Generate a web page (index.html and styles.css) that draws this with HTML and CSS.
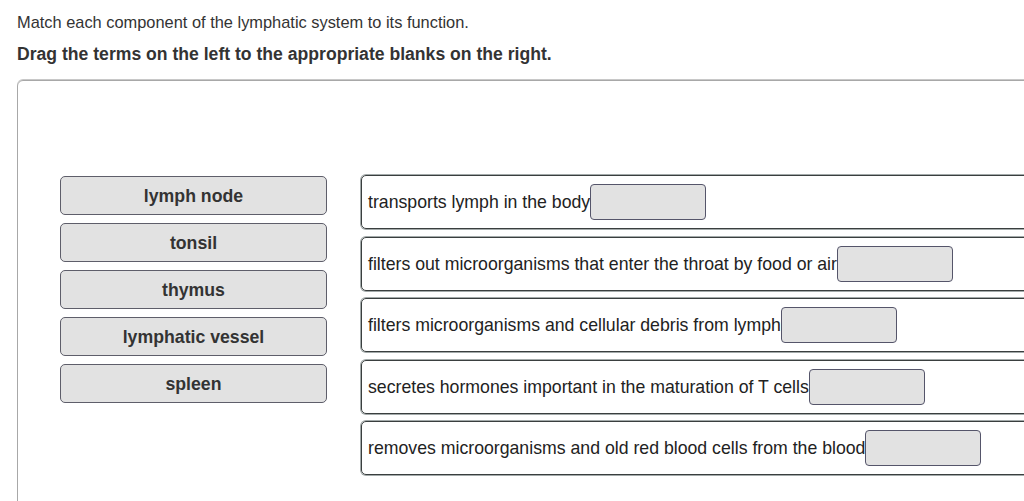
FILE: index.html
```html
<!DOCTYPE html>
<html lang="en">
<head>
  <meta charset="UTF-8">
  <title>Lymphatic System Matching</title>
  <link rel="stylesheet" href="styles.css">
</head>
<body>
  <p class="prompt">Match each component of the lymphatic system to its function.</p>
  <p class="instructions">Drag the terms on the left to the appropriate blanks on the right.</p>

  <div class="panel">
    <div class="terms">
      <div class="term">lymph node</div>
      <div class="term">tonsil</div>
      <div class="term">thymus</div>
      <div class="term">lymphatic vessel</div>
      <div class="term">spleen</div>
    </div>

    <div class="targets">
      <div class="target">transports lymph in the body<span class="blank"></span></div>
      <div class="target">filters out microorganisms that enter the throat by food or air<span class="blank"></span></div>
      <div class="target">filters microorganisms and cellular debris from lymph<span class="blank"></span></div>
      <div class="target">secretes hormones important in the maturation of T cells<span class="blank"></span></div>
      <div class="target">removes microorganisms and old red blood cells from the blood<span class="blank"></span></div>
    </div>
  </div>
</body>
</html>
```

FILE: styles.css
```css
html, body {
  overflow: hidden;
}

body {
  margin: 0;
  padding: 12px 0 0 17px;
  font-family: "Liberation Sans", Arial, sans-serif;
  font-size: 16.4px;
  line-height: 20px;
  color: #333;
  background: #fff;
}

.prompt {
  margin: 0;
}

.instructions {
  margin: 12px 0 0;
  font-size: 17.6px;
  font-weight: bold;
}

.panel {
  display: flex;
  align-items: flex-start;
  width: 1060px;
  height: 480px;
  margin-top: 16px;
  padding: 95px 0 0 42px;
  border: 1px solid #a8a8a8;
  border-radius: 6px;
  box-shadow: 0 -1px 0 #c8c8c8;
}

/* draggable terms */
.terms {
  display: flex;
  flex-direction: column;
  gap: 8px;
  width: 267px;
  flex-shrink: 0;
}

.term {
  display: flex;
  align-items: center;
  justify-content: center;
  height: 39px;
  box-sizing: border-box;
  background: #e2e2e2;
  border: 1px solid #5e5e6a;
  border-radius: 5px;
  font-size: 17.7px;
  font-weight: bold;
  color: #333;
}

/* statements with drop blanks */
.targets {
  display: flex;
  flex-direction: column;
  gap: 7.5px;
  width: 720px;
  margin-left: 34px;
  margin-top: -1px;
}

.target {
  display: flex;
  align-items: center;
  height: 54px;
  box-sizing: border-box;
  padding: 0 6px;
  border: 1px solid #3a3f3f;
  border-radius: 5px;
  box-shadow: 0 0 0 1px #a3aaaa;
  font-size: 17.7px;
  color: #222;
}

.blank {
  width: 116px;
  height: 36px;
  box-sizing: border-box;
  background: #e2e2e2;
  border: 1px solid #55556a;
  border-radius: 4px;
  flex-shrink: 0;
}
```
